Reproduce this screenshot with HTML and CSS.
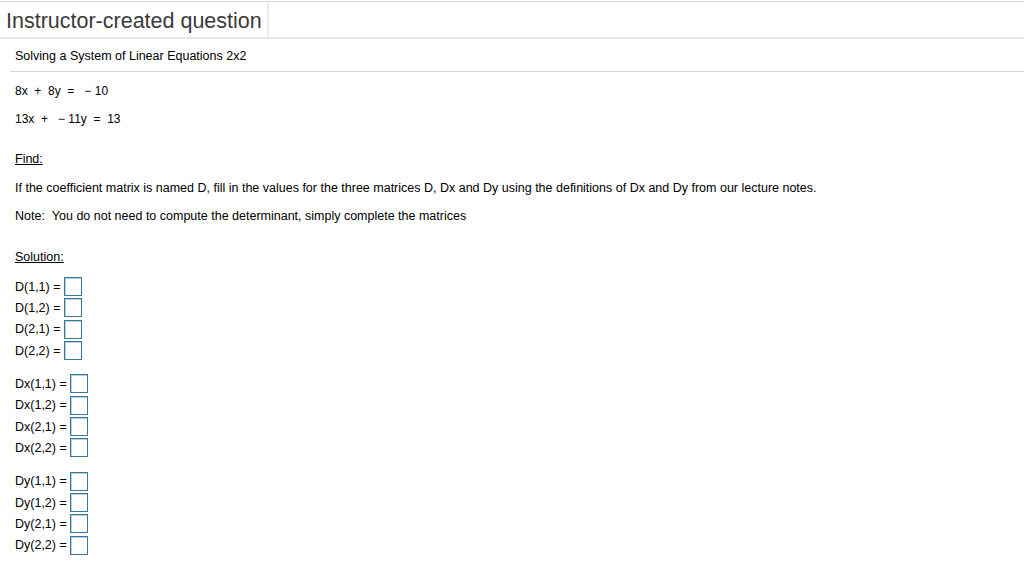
FILE: index.html
```html
<!DOCTYPE html>
<html>
<head>
<meta charset="utf-8">
<link rel="stylesheet" href="styles.css">
</head>
<body>
<div class="header">
  <h1 class="title">Instructor-created question</h1>
</div>
<div class="content">
  <div class="subject">Solving a System of Linear Equations 2x2</div>
  <div class="body">
    <p class="eq">8x &nbsp;+ &nbsp;8y &nbsp;= &nbsp; − 10</p>
    <p class="eq">13x &nbsp;+ &nbsp; − 11y &nbsp;= &nbsp;13</p>
    <p class="heading find"><u>Find:</u></p>
    <p class="line">If the coefficient matrix is named D, fill in the values for the three matrices D, Dx and Dy using the definitions of Dx and Dy from our lecture notes.</p>
    <p class="line">Note: &nbsp;You do not need to compute the determinant, simply complete the matrices</p>
    <p class="heading solution"><u>Solution:</u></p>
    <div class="group">
      <div class="row"><span>D(1,1) =</span><span class="box"></span></div>
      <div class="row"><span>D(1,2) =</span><span class="box"></span></div>
      <div class="row"><span>D(2,1) =</span><span class="box"></span></div>
      <div class="row"><span>D(2,2) =</span><span class="box"></span></div>
    </div>
    <div class="group">
      <div class="row"><span>Dx(1,1) =</span><span class="box"></span></div>
      <div class="row"><span>Dx(1,2) =</span><span class="box"></span></div>
      <div class="row"><span>Dx(2,1) =</span><span class="box"></span></div>
      <div class="row"><span>Dx(2,2) =</span><span class="box"></span></div>
    </div>
    <div class="group">
      <div class="row"><span>Dy(1,1) =</span><span class="box"></span></div>
      <div class="row"><span>Dy(1,2) =</span><span class="box"></span></div>
      <div class="row"><span>Dy(2,1) =</span><span class="box"></span></div>
      <div class="row"><span>Dy(2,2) =</span><span class="box"></span></div>
    </div>
  </div>
</div>
</body>
</html>
```
FILE: styles.css
```css
* { box-sizing: border-box; }
body {
  margin: 0;
  font-family: "Liberation Sans", Arial, Helvetica, sans-serif;
  color: #000;
  background: #fff;
}
.header {
  margin-top: 1px;
  border-top: 1px solid #d6d6d8;
  border-bottom: 2px solid #e6e8ec;
  height: 38px;
  padding-top: 1px;
}
.title {
  display: inline-block;
  margin: 0;
  height: 35px;
  padding: 6px 5px 0 6px;
  font-size: 21.5px;
  font-weight: normal;
  line-height: 24px;
  color: #3a3a3a;
  border-right: 2px solid #eaeaec;
}
.content {
  margin-left: 10px;
}
.subject {
  font-size: 12.5px;
  line-height: 16px;
  padding: 9px 0 8px 5px;
  border-bottom: 1px solid #d6d6d8;
  height: 33px;
}
.body {
  padding-left: 5px;
  font-size: 12.5px;
}
p {
  margin: 0;
  line-height: 16px;
}
.eq { font-size: 12px; }
.eq:first-child { margin-top: 11px; }
.eq + .eq { margin-top: 12px; }
.find { margin-top: 24px; }
.line { margin-top: 13px; }
.line + .line { margin-top: 12px; }
.solution { margin-top: 25px; }
.heading u { text-underline-offset: 1px; }
.group { margin-top: 11px; }
.group + .group { margin-top: 12px; }
.row {
  display: flex;
  align-items: center;
  height: 21.33px;
  gap: 3px;
}
.box {
  display: inline-block;
  width: 18px;
  height: 19px;
  border: 1px solid #3a7898;
  box-shadow: inset 1px 1px 0 #b5d0de;
  background: #fff;
}
```
